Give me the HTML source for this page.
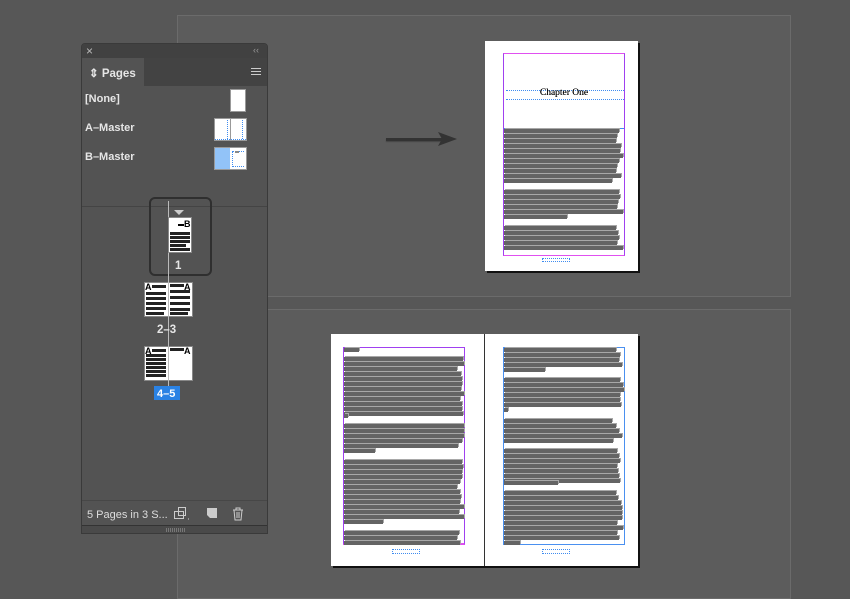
<!DOCTYPE html>
<html><head><meta charset="utf-8"><style>
*{margin:0;padding:0;box-sizing:border-box}
body{width:850px;height:587px;background:#575757;position:relative;overflow:hidden;font-family:"Liberation Sans",sans-serif}
.a{position:absolute}
.bar{position:absolute;height:4px;background:#646464;box-shadow:1px -1px 0 #a8a8a8}
.dot{border-top:1px dotted #3f8cf0}
.t{color:#e6e6e6;font-size:11px;font-weight:bold}
.tb{position:absolute;height:3px;background:#222}
</style></head><body>
<div class="a" style="left:177px;top:15px;width:614px;height:282px;background:#5c5c5c;border:1px solid #6b6b6b"></div>
<div class="a" style="left:177px;top:309px;width:614px;height:290px;background:#5c5c5c;border:1px solid #6b6b6b"></div>

<div class="a" style="left:386px;top:138px;width:56px;height:3px;background:#333;box-shadow:0 1px 1px #444"></div>
<svg class="a" style="left:436px;top:130px" width="24" height="18"><path d="M2 2 L21 9 L2 16 L6 9 Z" fill="#333"/></svg>

<div class="a" style="left:485px;top:41px;width:153px;height:230px;background:#fff;box-shadow:2px 2px 0 #111"></div>
<div class="a" style="left:503px;top:53px;width:122px;height:203px;border:1px solid #a040f0;border-top-color:#e050f0;border-bottom-color:#e050f0"></div>
<div class="a dot" style="left:506px;top:90px;width:118px"></div>
<div class="a dot" style="left:506px;top:99px;width:118px"></div>
<div class="a" style="left:503px;top:88px;width:122px;text-align:center;font-family:'Liberation Serif',serif;font-size:9.5px;color:#000;text-shadow:0 0 0.3px #000">Chapter One</div>
<div class="a" style="left:504px;top:128px;width:120px;height:1px;background:#3f8cf0"></div>
<div class="a" style="left:542px;top:258px;width:28px;height:4px;border:1px dotted #3f8cf0"></div>

<div class="a" style="left:331px;top:334px;width:307px;height:232px;background:#fff;box-shadow:2px 2px 0 #111"></div>
<div class="a" style="left:484px;top:334px;width:1px;height:232px;background:#333"></div>
<div class="a" style="left:343px;top:347px;width:122px;height:198px;border:1px solid #a040f0;border-bottom:2px solid #e050f0"></div>
<div class="a" style="left:503px;top:347px;width:122px;height:198px;border:1px solid #4a90f0"></div>
<div class="a" style="left:392px;top:549px;width:28px;height:5px;border:1px dotted #3f8cf0"></div>
<div class="a" style="left:542px;top:549px;width:28px;height:5px;border:1px dotted #3f8cf0"></div>

<div id="bars"></div>

<div class="a" style="left:81px;top:43px;width:187px;height:491px;background:#535353;border:1px solid #3a3a3a;border-radius:4px 4px 0 0;overflow:hidden">
 <div class="a" style="left:0;top:0;width:187px;height:14px;background:#414141"></div>
 <div class="a" style="left:4px;top:0px;color:#bbb;font-size:12px">×</div>
 <div class="a" style="left:171px;top:1px;color:#999;font-size:9px">‹‹</div>
 <div class="a" style="left:0;top:14px;width:187px;height:28px;background:#434343"></div>
 <div class="a" style="left:0;top:14px;width:62px;height:28px;background:#535353"></div>
 <div class="a t" style="left:7px;top:22px;font-size:11.5px">⇕ Pages</div>
 <div class="a" style="left:169px;top:24px;width:10px;height:7px;border-top:1px solid #ccc;border-bottom:1px solid #ccc"></div>
 <div class="a" style="left:169px;top:27px;width:10px;height:1px;background:#ccc"></div>
 <div class="a t" style="left:3px;top:49px">[None]</div>
 <div class="a t" style="left:3px;top:78px">A–Master</div>
 <div class="a t" style="left:3px;top:107px">B–Master</div>
 <div class="a" style="left:148px;top:45px;width:16px;height:23px;background:#fff;border:1px solid #999"></div>
 <div class="a" style="left:132px;top:74px;width:33px;height:23px;background:#fff;border:1px solid #999"></div>
 <div class="a" style="left:148px;top:74px;width:1px;height:23px;background:#999"></div>
 <div class="a" style="left:145px;top:76px;width:1px;height:19px;border-left:1px dotted #3f8cf0"></div>
 <div class="a" style="left:160px;top:76px;width:1px;height:19px;border-left:1px dotted #3f8cf0"></div>
 <div class="a" style="left:133px;top:95px;width:31px;border-top:1px dotted #3f8cf0"></div>
 <div class="a" style="left:132px;top:103px;width:33px;height:23px;background:#fff;border:1px solid #999"></div>
 <div class="a" style="left:133px;top:104px;width:15px;height:21px;background:#92c3f8"></div>
 <div class="a" style="left:150px;top:107px;width:12px;height:16px;border:1px dotted #3f8cf0;border-right:none"></div>
 <div class="a" style="left:153px;top:107px;width:4px;height:2px;background:#888"></div>
 <div class="a" style="left:0;top:162px;width:187px;height:1px;background:#444"></div>
 <div class="a" style="left:67px;top:153px;width:63px;height:79px;border:2px solid #2f2f2f;border-radius:6px"></div>
 <div class="a" style="left:86px;top:157px;width:1px;height:192px;background:#bbb"></div>
 <div class="a" style="left:92px;top:166px;width:0;height:0;border-left:5px solid transparent;border-right:5px solid transparent;border-top:5px solid #ccc"></div>
 <div class="a" style="left:86px;top:173px;width:24px;height:36px;background:#fff;border:1px solid #888"></div>
 <div class="a" style="left:96px;top:180px;width:6px;height:2px;background:#000"></div>
 <div class="a" style="left:102px;top:175px;font-size:9px;font-weight:bold;color:#000">B</div>
 <div class="tb" style="left:88px;top:188px;width:20px"></div><div class="tb" style="left:88px;top:192px;width:20px"></div><div class="tb" style="left:88px;top:196px;width:20px"></div><div class="tb" style="left:88px;top:200px;width:16px"></div><div class="tb" style="left:88px;top:204px;width:20px"></div>
 <div class="a t" style="left:93px;top:216px;font-size:11.5px">1</div>
 <div class="a" style="left:62px;top:238px;width:49px;height:35px;background:#fff;border:1px solid #888"></div>
 <div class="a" style="left:86px;top:238px;width:1px;height:35px;background:#bbb"></div>
 <div class="a" style="left:63px;top:238px;font-size:9px;font-weight:bold;color:#000">A</div>
 <div class="a" style="left:102px;top:238px;font-size:9px;font-weight:bold;color:#000">A</div>
 <div class="tb" style="left:70px;top:241px;width:14px"></div><div class="tb" style="left:64px;top:248px;width:20px"></div><div class="tb" style="left:64px;top:253px;width:20px"></div><div class="tb" style="left:64px;top:258px;width:20px"></div><div class="tb" style="left:64px;top:263px;width:20px"></div><div class="tb" style="left:64px;top:268px;width:18px"></div>
 <div class="tb" style="left:88px;top:240px;width:14px"></div><div class="tb" style="left:88px;top:246px;width:20px"></div><div class="tb" style="left:88px;top:252px;width:20px"></div><div class="tb" style="left:88px;top:258px;width:20px"></div><div class="tb" style="left:88px;top:264px;width:20px"></div><div class="tb" style="left:88px;top:268px;width:18px"></div>
 <div class="a t" style="left:75px;top:280px;font-size:11.5px">2–3</div>
 <div class="a" style="left:62px;top:302px;width:49px;height:35px;background:#fff;border:1px solid #888"></div>
 <div class="a" style="left:86px;top:302px;width:1px;height:35px;background:#bbb"></div>
 <div class="a" style="left:63px;top:302px;font-size:9px;font-weight:bold;color:#000">A</div>
 <div class="a" style="left:102px;top:302px;font-size:9px;font-weight:bold;color:#000">A</div>
 <div class="tb" style="left:70px;top:305px;width:14px"></div><div class="tb" style="left:64px;top:310px;width:20px"></div><div class="tb" style="left:64px;top:314px;width:20px"></div><div class="tb" style="left:64px;top:318px;width:20px"></div><div class="tb" style="left:64px;top:322px;width:20px"></div><div class="tb" style="left:64px;top:326px;width:20px"></div><div class="tb" style="left:64px;top:330px;width:20px"></div>
 <div class="tb" style="left:88px;top:304px;width:14px"></div>
 <div class="a" style="left:72px;top:342px;width:26px;height:14px;background:#2a82e4"></div>
 <div class="a t" style="left:75px;top:344px;color:#fff">4–5</div>
 <div class="a" style="left:0;top:456px;width:187px;height:1px;background:#474747"></div>
 <div class="a" style="left:5px;top:465px;color:#ddd;font-size:11px">5 Pages in 3 S...</div>
 <svg class="a" style="left:92px;top:462px" width="70" height="16" fill="none" stroke="#ccc">
  <rect x="0.5" y="5.5" width="9" height="7"/><rect x="4.5" y="1.5" width="7" height="8"/><path d="M14 13h1"/>
  <path d="M33 2h10v10h-10z" fill="#ccc" stroke="none"/><path d="M33 9l3 3h-3z" fill="#535353" stroke="none"/>
  <path d="M59 4h10M62 4V2h4v2M60 4l1 10h6l1-10M63 6v6M65 6v6"/>
 </svg>
 <div class="a" style="left:0;top:481px;width:187px;height:1px;background:#333"></div>
 <div class="a" style="left:0;top:482px;width:187px;height:9px;background:#4a4a4a"></div>
 <div class="a" style="left:84px;top:484px;width:19px;height:4px;background:repeating-linear-gradient(90deg,#777 0 1px,transparent 1px 2px)"></div>
</div>

<script>
var c=document.getElementById('bars'),h='';
function P(x,lines){lines.forEach(function(l){h+='<div class="bar" style="left:'+x+'px;top:'+l[0]+'px;width:'+l[1]+'px"></div>';});}
function para(y,n,last,ws){var a=[];for(var i=0;i<n;i++){a.push([y+i*5,i==n-1&&last?last:ws[i%ws.length]]);}return a;}
P(504,para(129,11,0,[115,113,112,117,116,119,115,113,112,117,108]));
P(504,para(190,6,63,[115,116,114,113,119]));
P(504,para(226,5,0,[112,114,115,113,119]));
P(344,[[348,15]]);
P(344,para(357,12,0,[119,120,113,117,118,118,117,120,116,118,118,119]));
P(344,[[414,4]]);
P(344,para(424,6,31,[120,120,120,118,114]));
P(344,para(460,13,39,[118,119,118,118,116,113,116,117,116,120,115,120]));
P(344,para(531,3,0,[115,113,116]));
P(504,para(348,5,41,[112,116,115,118]));
P(504,para(378,7,4,[116,119,120,116,116,117]));
P(504,para(419,5,0,[108,112,115,118,109]));
P(504,para(449,7,0,[113,115,116,113,114,115,116]));
P(504,[[481,54]]);
P(504,para(491,11,16,[112,114,117,118,118,118,113,119,113,115]));
c.innerHTML=h;
</script>
</body></html>
